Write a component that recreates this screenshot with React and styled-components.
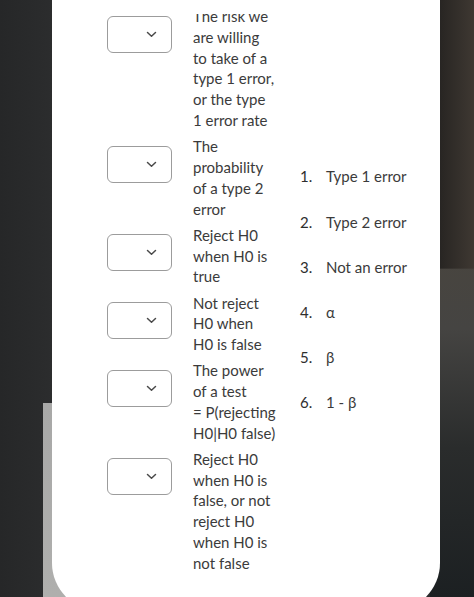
import React from "react";
import styled, { createGlobalStyle } from "styled-components";

const Global = createGlobalStyle`
  html, body { margin: 0; padding: 0; }
  body { background: #2a2b2c; overflow: hidden; }
  * { box-sizing: border-box; }
`;

const Stage = styled.div`
  width: 474px;
  height: 597px;
  overflow: hidden;
  display: flex;
  background:
    linear-gradient(#a8a8a7, #b0b0ae) 43px 403px / 40px 220px no-repeat,
    linear-gradient(to right, #262728 0%, #2b2c2d 80%, #2d2e2f 100%) 0 0 / 60px 100% no-repeat,
    linear-gradient(to right, #1f1f1f 0%, #2a2724 30%, #3e3832 100%) 430px 0 / 44px 45% no-repeat,
    linear-gradient(to bottom, #3e3832 0%, #4a453d 35%, #454442 55%, #2a2c2c 75%, #1c2022 100%) 430px 0 / 44px 100% no-repeat;
`;

const Panel = styled.div`
  margin-left: 52px;
  width: 388px;
  height: 611px;
  flex: none;
  background: #ffffff;
  border-radius: 0 0 48px 48px;
  padding-top: 13.5px;
  overflow: hidden;
  font-family: Lato, "Open Sans", sans-serif;
  font-size: 15px;
  line-height: 20.8px;
  color: #3b3b3b;
`;

const Viewport = styled.div`
  height: 100%;
  overflow: hidden;
`;

const Content = styled.div`
  margin-top: -7.5px;
  padding-left: 55px;
  display: flex;
  align-items: center;
`;

const Matches = styled.div`
  display: flex;
  flex-direction: column;
  gap: 5.4px;
`;

const Row = styled.div`
  display: flex;
  align-items: flex-start;
  gap: 21px;
`;

const Select = styled.div`
  width: 65px;
  height: 37px;
  margin-top: 9.5px;
  flex: none;
  border: 1px solid #9c9c9c;
  border-radius: 6px;
  background: #fff;
  display: flex;
  align-items: center;
  justify-content: flex-end;
  padding-right: 14px;
`;

const Prompt = styled.div`
  width: 82px;
  white-space: normal;
`;

const Answers = styled.ol`
  list-style: none;
  margin: 0 0 0 25px;
  padding: 0;
  display: flex;
  flex-direction: column;
  gap: 24.4px;
`;

const Answer = styled.li`
  display: flex;
`;

const Num = styled.span`
  width: 26px;
  flex: none;
  color: #2e2e2e;
`;

const Chevron = () => (
  <svg width="11" height="7" viewBox="0 0 11 7" aria-hidden="true">
    <path d="M1.5 1.5 L5.5 5.2 L9.5 1.5" fill="none" stroke="#4a4a4a" strokeWidth="1.5" strokeLinecap="round" strokeLinejoin="round" />
  </svg>
);

const prompts = [
  "The risk we are willing to take of a type 1 error, or the type 1 error rate",
  "The probability of a type 2 error",
  "Reject H0 when H0 is true",
  "Not reject H0 when H0 is false",
  "The power of a test =\u00A0P(rejecting H0|H0\u00A0false)",
  "Reject H0 when H0 is false, or not reject H0 when H0 is not false",
];

const options = ["Type 1 error", "Type 2 error", "Not an error", "α", "β", "1 - β"];

export default function App() {
  return (
    <>
      <Global />
      <Stage>
        <Panel>
          <Viewport>
            <Content>
              <Matches>
                {prompts.map((p) => (
                  <Row key={p}>
                    <Select>
                      <Chevron />
                    </Select>
                    <Prompt>{p}</Prompt>
                  </Row>
                ))}
              </Matches>
              <Answers>
                {options.map((o, i) => (
                  <Answer key={o}>
                    <Num>{i + 1}.</Num>
                    <span>{o}</span>
                  </Answer>
                ))}
              </Answers>
            </Content>
          </Viewport>
        </Panel>
      </Stage>
    </>
  );
}
